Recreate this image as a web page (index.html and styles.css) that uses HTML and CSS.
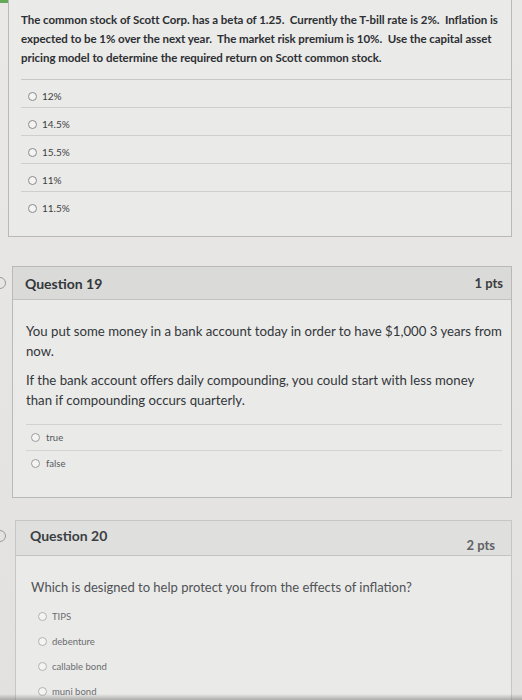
FILE: index.html
```html
<!DOCTYPE html>
<html>
<head>
<meta charset="utf-8">
<link rel="stylesheet" href="styles.css">
</head>
<body>
<div class="page">
  <div class="topbar"></div>

  <section class="card card-q18">
    <div class="q18-text">The common stock of Scott Corp. has a beta of 1.25.&nbsp; Currently the T-bill rate is 2%.&nbsp; Inflation is expected to be 1% over the next year.&nbsp; The market risk premium is 10%.&nbsp; Use the capital asset pricing model to determine the required return on Scott common stock.</div>
    <ul class="answers a18">
      <li><span class="radio"></span>12%</li>
      <li><span class="radio"></span>14.5%</li>
      <li><span class="radio"></span>15.5%</li>
      <li><span class="radio"></span>11%</li>
      <li><span class="radio"></span>11.5%</li>
    </ul>
  </section>

  <div class="qwrap q19wrap">
    <span class="flag"></span>
    <section class="card card-q19">
      <header class="qhead">
        <span class="qtitle">Question 19</span>
        <span class="qpts">1 pts</span>
      </header>
      <div class="qbody">
        <p>You put some money in a bank account today in order to have $1,000 3 years from now.</p>
        <p>If the bank account offers daily compounding, you could start with less money than if compounding occurs quarterly.</p>
        <ul class="answers a19">
          <li><span class="radio"></span>true</li>
          <li><span class="radio"></span>false</li>
        </ul>
      </div>
    </section>
  </div>

  <div class="qwrap q20wrap">
    <span class="flag"></span>
    <section class="card card-q20">
      <header class="qhead qhead20">
        <span class="qtitle">Question 20</span>
        <span class="qpts qpts20">2 pts</span>
      </header>
      <div class="qbody qbody20">
        <p>Which is designed to help protect you from the effects of inflation?</p>
        <ul class="answers a20">
          <li><span class="radio"></span>TIPS</li>
          <li><span class="radio"></span>debenture</li>
          <li><span class="radio"></span>callable bond</li>
          <li><span class="radio"></span>muni bond</li>
        </ul>
      </div>
    </section>
  </div>
  <div class="shade"></div>
</div>
</body>
</html>
```

FILE: styles.css
```css
html, body {
  margin: 0;
  padding: 0;
}
body {
  width: 522px;
  height: 700px;
  overflow: hidden;
  background: #e4e3e1;
  font-family: Lato, "Open Sans", "Liberation Sans", sans-serif;
  color: #2f3236;
}
.page {
  position: relative;
  height: 700px;
  overflow: hidden;
  background: linear-gradient(180deg, #e9e8e6 0%, #e6e5e3 50%, #e2e1df 100%);
}
.topbar {
  width: 100px;
  height: 3px;
  background: #63a957;
}
.card {
  background: #eaeae8;
  border: 1px solid #b9b9b7;
}
ul.answers {
  list-style: none;
  margin: 0;
  padding: 0;
}
.radio {
  display: inline-block;
  box-sizing: border-box;
  width: 9px;
  height: 9px;
  border: 1px solid #8a8a8a;
  border-radius: 50%;
  background: #f4f4f2;
  vertical-align: middle;
  margin-right: 5px;
  position: relative;
  top: -1px;
}

/* Question 18 */
.card-q18 {
  margin: -3px 10px 0 8px;
  border-top: none;
  padding: 10px 0 16px 0;
}
.q18-text {
  padding: 0 0 12px 12px;
  font-size: 11.5px;
  line-height: 19px;
  font-weight: 700;
  color: #2d2f33;
  letter-spacing: -0.05px;
}
.a18 {
  margin-left: 12px !important;
  border-top: 1px solid #c8c8c6;
}
.a18 li {
  height: 28px;
  box-sizing: border-box;
  padding: 9px 0 0 7px;
  font-size: 10px;
  line-height: 14px;
  color: #3c3e42;
  border-bottom: 1px solid #cfcfcd;
}
.a18 li:last-child {
  border-bottom: none;
}

/* Question wrappers */
.qwrap {
  position: relative;
}
.flag {
  position: absolute;
  left: -6px;
  width: 10px;
  height: 10px;
  border: 1px solid #9a9a98;
  border-radius: 50%;
}
.q19wrap {
  margin-top: 29px;
  padding: 0 10px 0 12px;
}
.q19wrap .flag { top: 11px; }
.q20wrap {
  margin-top: 22px;
  padding: 0 10px 0 15px;
}
.q20wrap .flag { top: 10px; }

.qhead {
  display: flex;
  justify-content: space-between;
  align-items: center;
  height: 33px;
  box-sizing: border-box;
  padding: 0 8px 0 12px;
  background: #dadad8;
  border-bottom: 1px solid #c2c2c0;
}
.qtitle {
  font-size: 14px;
  font-weight: 700;
  color: #33363a;
}
.qpts {
  font-size: 13px;
  font-weight: 700;
  color: #3a3c40;
}
.qbody {
  padding: 21px 9px 10px 13px;
}
.qbody p {
  margin: 0 0 9px 0;
  font-size: 13.2px;
  line-height: 20px;
  color: #33363a;
}
.a19 {
  margin-top: 14px !important;
  border-top: 1px solid #d2d2d0;
}
.a19 li {
  height: 26px;
  box-sizing: border-box;
  padding: 6px 0 0 5px;
  font-size: 9.5px;
  line-height: 14px;
  color: #55585c;
  border-bottom: 1px solid #d4d4d2;
}
.a19 li:last-child { border-bottom: none; height: 36px; }
.a19 .radio { margin-right: 6px; border-color: #9c9c9c; }

/* Question 20 */
.card-q20 {
  height: 220px;
  border-color: #c6c6c4;
}
.qhead20 {
  height: 35px;
  align-items: flex-start;
  padding: 6px 16px 0 14px;
  background: #dfdfdd;
}
.qhead20 .qtitle { color: #3b3e42; }
.qpts20 {
  padding-top: 10px;
  color: #606266;
}
.qbody20 {
  padding: 21px 9px 0 15px;
}
.qbody20 p {
  font-size: 13px;
  color: #4f5256;
  margin-bottom: 10px;
}
.a20 li {
  height: 25px;
  box-sizing: border-box;
  padding: 3px 0 0 7px;
  font-size: 9.5px;
  line-height: 14px;
  color: #6a6d70;
}
.a20 .radio { border-color: #b2b2b0; margin-right: 5px; }

.shade {
  position: absolute;
  left: 0;
  right: 0;
  bottom: 0;
  height: 6px;
  background: linear-gradient(180deg, rgba(120,120,120,0) 0%, rgba(110,110,110,0.5) 100%);
}
```
